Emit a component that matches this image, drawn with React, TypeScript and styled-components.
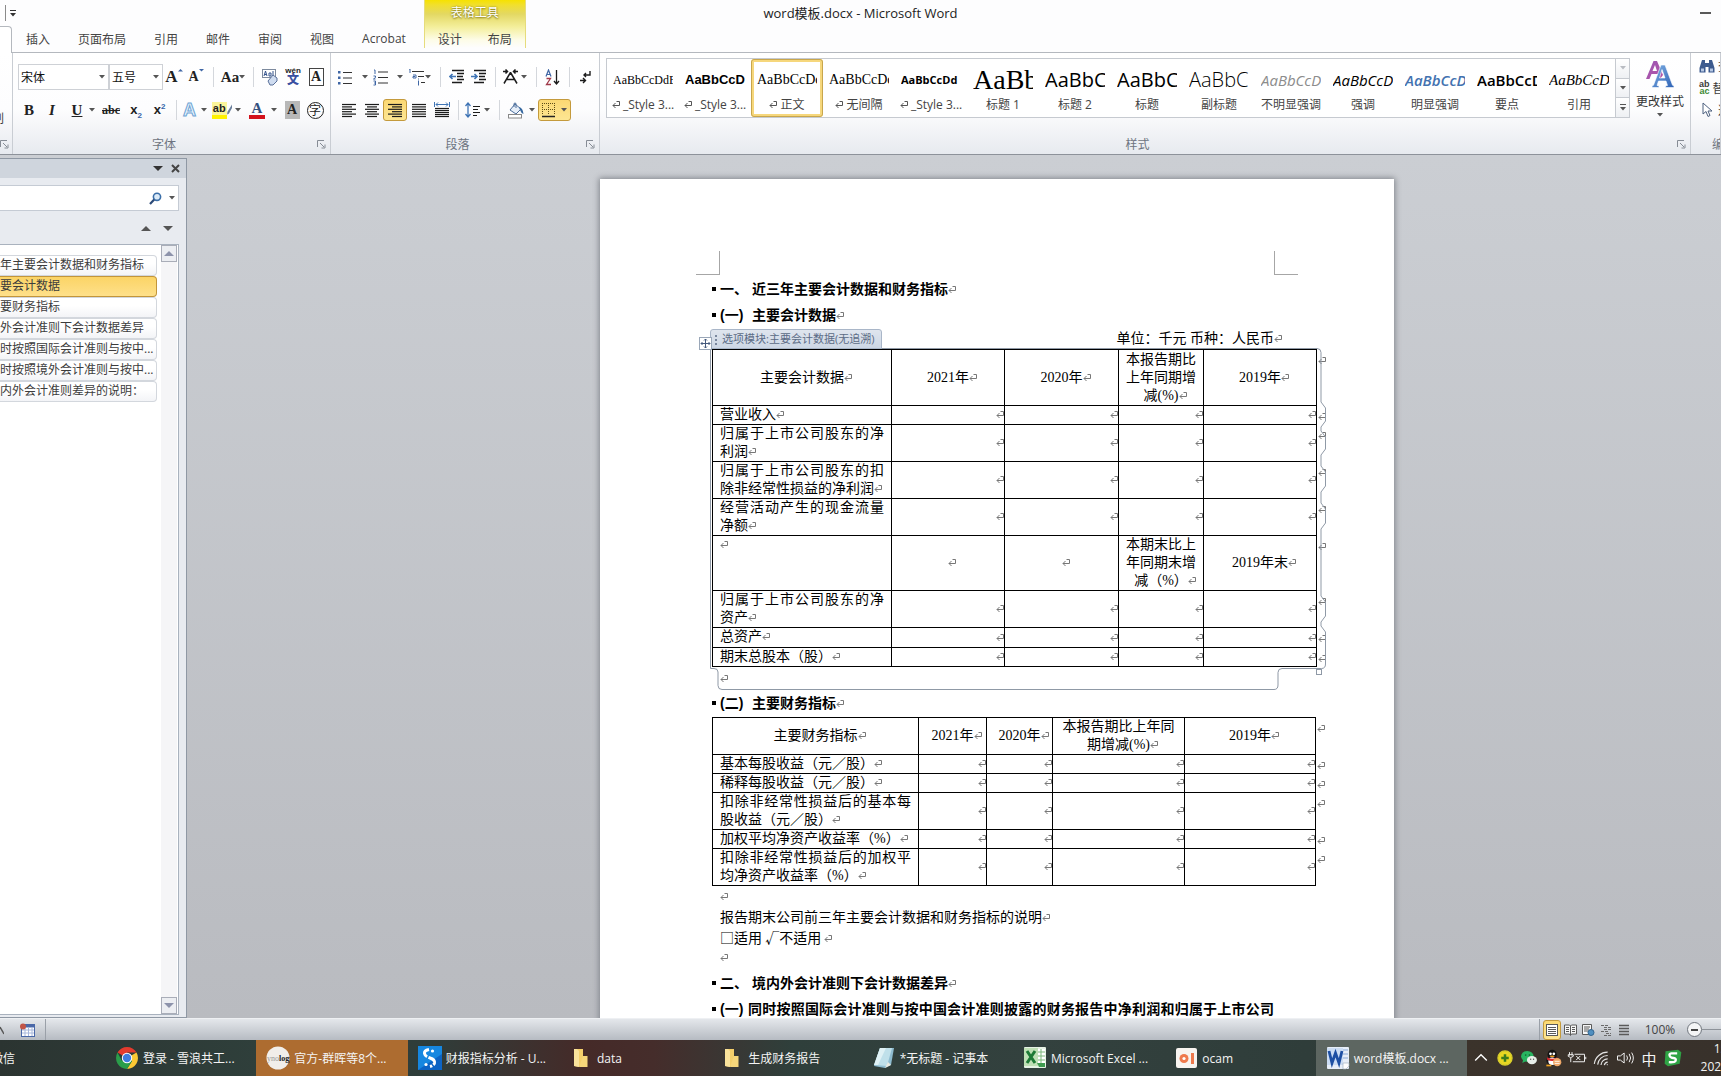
import React from "react";
import styled, { createGlobalStyle, css } from "styled-components";

const UI = '"Open Sans", "Noto Sans CJK SC", sans-serif';
const DOC = '"Liberation Serif", "Noto Sans CJK SC", serif';
const ARIAL = '"Liberation Sans", "Noto Sans CJK SC", sans-serif';

const Global = createGlobalStyle`
  * { box-sizing: border-box; }
  body { margin: 0; font-family: ${UI}; font-size: 12px; color: #3c3c3c; overflow: hidden; }
  button, select, input { font: inherit; color: inherit; margin: 0; }
  h1, h2, p { margin: 0; }
`;

const Shell = styled.div`
  display: flex;
  flex-direction: column;
  height: 100vh;
  background: #fdfdfe;
`;

/* ---------- title bar and tabs ---------- */

const Header = styled.header`
  display: grid;
  flex: none;
  grid-template-columns: auto auto 1fr;
  grid-template-rows: 26px 26px;
  background: #fdfdfe;
  border-bottom: 1px solid #b4b8be;
`;

const Title = styled.div`
  grid-row: 1;
  grid-column: 1 / -1;
  justify-self: center;
  line-height: 26px;
  font-size: 13px;
  color: #222;
  white-space: pre;
`;

const PlainButton = styled.button`
  display: inline-flex;
  align-items: center;
  justify-content: center;
  padding: 0;
  border: 0;
  background: none;
`;

const QuickAccess = styled(PlainButton)`
  grid-row: 1;
  grid-column: 1;
  justify-self: start;
  align-self: center;
  width: 15px;
  height: 16px;
  margin-left: 5px;
  border-left: 1px solid #8a8a8a;
`;

const Minimize = styled(PlainButton)`
  grid-row: 1;
  grid-column: 3;
  justify-self: end;
  width: 32px;
`;

const Tabs = styled.nav`
  grid-row: 2;
  grid-column: 1;
  display: flex;
`;

const ActiveTabEdge = styled.div`
  width: 12px;
  margin-bottom: -1px;
  border: 1px solid #b4b8be;
  border-width: 1px 1px 0 0;
  border-radius: 0 4px 0 0;
  background: #fff;
`;

const Tab = styled(PlainButton)`
  padding: 0 14px 1px;
  color: #444;
  white-space: nowrap;
`;

const ContextTabs = styled.div`
  grid-row: 1 / 3;
  grid-column: 2;
  display: flex;
  flex-direction: column;
  width: 102px;
  margin: 0 0 4px 4px;
  border: solid #e6dc7c;
  border-width: 0 1px;
  background: linear-gradient(#f6e200 0, #f1df2e 5px, #e3d862 14px, #f4ef9c 27px, #fdfce8 40px, #fdfdfe 100%);
`;

const ContextTitle = styled.div`
  line-height: 26px;
  text-align: center;
  color: #fff;
  text-shadow: 0 0 2px #8a8220, 0 1px 2px #8a8220;
`;

const ContextRow = styled.div`
  display: flex;
  height: 26px;
  flex: none;
  & > button { flex: 1; padding: 0 0 1px; }
`;

/* ---------- ribbon ---------- */

const Ribbon = styled.div`
  display: flex;
  flex: none;
  height: 102px;
  overflow: hidden;
  background: linear-gradient(#fff 0, #fdfdfe 55%, #e7eaef 100%);
  border-bottom: 1px solid #8d929a;
`;

const Group = styled.section<{ $w?: number; $grow?: boolean }>`
  display: flex;
  flex-direction: column;
  ${(p) => (p.$grow ? "flex: 1; min-width: 0;" : `flex: none; width: ${p.$w}px;`)}
  overflow: hidden;
  border-right: 1px solid #c9cdd3;
`;

const GroupBody = styled.div<{ $pad: string; $gap?: number }>`
  display: flex;
  flex: 1;
  flex-direction: column;
  gap: ${(p) => p.$gap ?? 9}px;
  padding: ${(p) => p.$pad};
`;

const GroupFoot = styled.div`
  display: flex;
  align-items: center;
  height: 20px;
  padding-right: 3px;
  color: #6d7480;
  & > span { flex: 1; text-align: center; white-space: nowrap; }
`;

const EdgeFoot = styled(GroupFoot)`
  justify-content: flex-end;
  padding: 0;
`;

const Launcher = styled(PlainButton)`
  width: 12px;
  height: 12px;
`;

const Row = styled.div<{ $h: number; $indent?: number }>`
  display: flex;
  align-items: center;
  height: ${(p) => p.$h}px;
  padding-left: ${(p) => p.$indent ?? 0}px;
`;

const Tool = styled(PlainButton)<{ $w?: number; $on?: boolean }>`
  flex: none;
  width: ${(p) => p.$w ?? 22}px;
  height: 22px;
  color: #222;
  ${(p) =>
    p.$on &&
    css`
      border: 1px solid #c49a3c;
      border-radius: 3px;
      background: linear-gradient(#fbd873, #fde693);
    `}
`;

const SizeTool = styled(Tool)`
  & > svg { align-self: flex-start; margin-top: 3px; }
`;

const Split = styled(Tool)`
  justify-content: space-between;
  padding: 0 3px 0 2px;
`;

const Sep = styled.span<{ $w?: number }>`
  flex: none;
  width: ${(p) => p.$w ?? 12}px;
  height: 20px;
  background: linear-gradient(#d4d7dc, #d4d7dc) center / 1px 100% no-repeat;
`;

const Glyph = styled.span<{ $size?: number; $serif?: boolean; $italic?: boolean; $color?: string }>`
  font-family: ${(p) => (p.$serif ? '"Liberation Serif", serif' : ARIAL)};
  font-size: ${(p) => p.$size ?? 14}px;
  line-height: 16px;
  font-weight: 700;
  font-style: ${(p) => (p.$italic ? "italic" : "normal")};
  color: ${(p) => p.$color ?? "#222"};
  & sub, & sup { font-size: 8px; line-height: 0; color: #3565a8; }
`;

const Underlined = styled(Glyph)`text-decoration: underline;`;
const Struck = styled(Glyph)`text-decoration: line-through;`;

const Outlined = styled(Glyph)`
  color: #e8f3fc;
  -webkit-text-stroke: 1px #6ea4d4;
`;

const Barred = styled(Glyph)<{ $bar: string; $hl?: string }>`
  display: inline-block;
  width: 16px;
  line-height: 13px;
  text-align: center;
  border-bottom: 4px solid ${(p) => p.$bar};
  background: ${(p) => p.$hl ?? "none"};
`;

const Boxed = styled(Glyph)<{ $fill?: string }>`
  width: 15px;
  text-align: center;
  border: 1px solid ${(p) => p.$fill ?? "#444"};
  background: ${(p) => p.$fill ?? "#fff"};
`;

const Circled = styled.span`
  width: 17px;
  height: 17px;
  border: 1px solid #222;
  border-radius: 50%;
  line-height: 15px;
  font-size: 12px;
  text-align: center;
`;

const Pinyin = styled.span`
  display: flex;
  flex-direction: column;
  align-items: center;
  font: 700 8px/6px ${ARIAL};
  & b { font-size: 12px; line-height: 12px; color: #3a4fa0; }
`;

const PickWrap = styled.label<{ $w: number }>`
  display: grid;
  flex: none;
  width: ${(p) => p.$w}px;
  height: 26px;
  align-items: center;
  & > * { grid-area: 1 / 1; }
  & > svg { justify-self: end; margin-right: 4px; pointer-events: none; }
`;

const Pick = styled.select`
  width: 100%;
  height: 26px;
  padding: 0 2px;
  appearance: none;
  border: 1px solid #ced1d6;
  border-radius: 0;
  background: #fff;
  color: #111;
`;

const StylesRow = styled.div`
  display: flex;
  height: 60px;
`;

const Gallery = styled.div`
  display: flex;
  flex: 1;
  min-width: 0;
  overflow: hidden;
  border: 1px solid #c6cad0;
  background: #fff;
`;

const StyleCard = styled.button<{ $on?: boolean }>`
  display: flex;
  flex: none;
  flex-direction: column;
  justify-content: flex-end;
  width: 72px;
  height: 58px;
  padding: 0 3px;
  border: 3px solid ${(p) => (p.$on ? "#f6d77c" : "transparent")};
  border-radius: 3px;
  outline: ${(p) => (p.$on ? "1px solid #c8a64c" : "none")};
  outline-offset: -1px;
  background: none;
  text-align: center;
`;

const Sample = styled.span<{ $font: string; $size: number; $css?: string }>`
  overflow: hidden;
  height: 31px;
  font-family: ${(p) => p.$font};
  font-size: ${(p) => p.$size}px;
  line-height: 30px;
  color: #000;
  text-align: left;
  white-space: nowrap;
  ${(p) => p.$css}
`;

const CardName = styled.span`
  line-height: 18px;
  white-space: nowrap;
  margin: 0 -6px;
  color: #444;
`;

const Scrollers = styled.div`
  display: flex;
  flex: none;
  flex-direction: column;
  width: 14px;
  & > button {
    flex: 1;
    border: 1px solid #c6cad0;
    border-left: 0;
    margin-bottom: -1px;
    background: linear-gradient(#fff, #eef0f3);
  }
  & > button:last-child { margin-bottom: 0; }
`;

const ChangeStyles = styled(PlainButton)`
  flex-direction: column;
  flex: none;
  width: 60px;
  gap: 3px;
  color: #333;
  white-space: nowrap;
`;

const EditTool = styled(PlainButton)`
  flex: none;
  justify-content: flex-start;
  gap: 3px;
  height: 18px;
  white-space: nowrap;
  & > svg { flex: none; }
`;

const CutLabel = styled.div<{ $w: number; $align?: string }>`
  display: flex;
  justify-content: ${(p) => p.$align ?? "flex-end"};
  width: ${(p) => p.$w}px;
  overflow: hidden;
  white-space: nowrap;
`;

/* ---------- work area ---------- */

const Work = styled.div`
  display: flex;
  flex: 1;
  min-height: 0;
  background: linear-gradient(#cbced3, #b9bbc0);
`;

const Pane = styled.aside`
  display: flex;
  flex: none;
  flex-direction: column;
  width: 187px;
  margin-top: 3px;
  border: solid #8f98a4;
  border-width: 1px 1px 1px 0;
  background: #e8ebf0;
`;

const PaneHead = styled.div`
  display: flex;
  align-items: center;
  justify-content: flex-end;
  gap: 8px;
  height: 19px;
  padding-right: 6px;
  background: #cfd5dd;
`;

const SearchBox = styled.label`
  display: flex;
  align-items: center;
  height: 26px;
  margin: 7px 7px 0 0;
  padding-right: 3px;
  gap: 7px;
  border: 1px solid #c5cbd4;
  border-left: 0;
  background: #fff;
`;

const SearchInput = styled.input`
  flex: 1;
  min-width: 0;
  border: 0;
  outline: 0;
  background: none;
`;

const PaneNav = styled.div`
  display: flex;
  align-items: center;
  justify-content: flex-end;
  gap: 12px;
  height: 33px;
  padding: 2px 13px 0 0;
`;

const PaneList = styled.div`
  display: flex;
  flex: 1;
  margin: 0 7px 2px 0;
  border: solid #a9b2be;
  border-width: 1px 1px 1px 0;
  background: #fff;
`;

const Outline = styled.ul`
  flex: 1;
  min-width: 0;
  margin: 0;
  padding: 10px 4px 0 0;
  list-style: none;
`;

const OutlineItem = styled.li<{ $on?: boolean }>`
  height: 21px;
  overflow: hidden;
  border: 1px solid ${(p) => (p.$on ? "#c2953a" : "#d3d7dd")};
  border-left: 0;
  border-radius: 0 4px 4px 0;
  background: ${(p) => (p.$on ? "linear-gradient(#fbd466, #fee08a)" : "linear-gradient(#fff 40%, #f3f4f7)")};
  line-height: 18px;
  white-space: nowrap;
`;

const ScrollColumn = styled.div`
  display: flex;
  flex: none;
  flex-direction: column;
  justify-content: space-between;
  width: 16px;
  margin-right: 1px;
  background: #f5f5f7;
`;

const ScrollEnd = styled(PlainButton)`
  height: 17px;
  border: 1px solid #a9adb8;
  background: #eceef2;
`;

const Canvas = styled.main`
  display: flex;
  flex: 1;
  min-width: 0;
  justify-content: center;
  align-items: flex-start;
  padding: 24px 0 0 86px;
  overflow: hidden;
`;

const Page = styled.article`
  position: relative;
  flex: none;
  width: 794px;
  min-height: 1123px;
  padding: 96px 120px;
  background: #fff;
  box-shadow: 0 0 6px 1px #80848b;
  color: #000;
  font: 14px/20px ${DOC};
`;

const Crop = styled.span<{ $side: "left" | "right" }>`
  position: absolute;
  top: 72px;
  ${(p) => p.$side}: 96px;
  width: 24px;
  height: 24px;
  border-bottom: 1px solid #a6a6a6;
  border-${(p) => (p.$side === "left" ? "right" : "left")}: 1px solid #a6a6a6;
`;

const headingCss = css`
  display: flex;
  align-items: center;
  margin-left: -8px;
  font-family: ${ARIAL};
  font-size: 14px;
  font-weight: 700;
  white-space: nowrap;
  &::before { content: ""; width: 4px; height: 4px; margin-right: 4px; background: #000; }
`;
const Heading1 = styled.h1`${headingCss} line-height: 28px;`;
const Heading2 = styled.h2`${headingCss} line-height: 24px; margin-bottom: 2px;`;
const Num = styled.span<{ $w?: number }>`width: ${(p) => p.$w ?? 32}px;`;
const FullLine = styled.span`
  flex: 1;
  text-align: justify;
  text-align-last: justify;
`;

const Para = styled.p<{ $h?: number; $end?: boolean }>`
  line-height: ${(p) => p.$h ?? 20}px;
  white-space: nowrap;
  ${(p) => p.$end && "text-align: right; margin-right: -8px;"}
`;

const ChoicePara = styled(Para)`
  font-family: "Noto Sans CJK JP", "Noto Sans CJK SC", sans-serif;
  line-height: 19px;
`;

const Control = styled.section`position: relative;`;

const ControlOutline = styled.svg`
  position: absolute;
  top: 0;
  left: -24px;
  pointer-events: none;
`;

const ControlTag = styled.div`
  position: absolute;
  top: 0;
  left: -10px;
  display: flex;
  align-items: center;
  gap: 4px;
  height: 20px;
  padding: 0 7px 0 4px;
  border: 1px solid #a9b6c8;
  border-radius: 3px 3px 0 0;
  background: linear-gradient(#dfe5ee, #cdd7e5);
  font: 11px/18px ${UI};
  color: #5b6b85;
  white-space: nowrap;
`;

const Handle = styled.span`
  position: absolute;
  top: 8px;
  left: -21px;
  display: flex;
  width: 13px;
  height: 13px;
  border: 1px solid #9aa7b8;
  background: #fff;
`;

const DocTable = styled.table<{ $w: number }>`
  width: ${(p) => p.$w}px;
  margin-left: -8px;
  border-collapse: collapse;
  table-layout: fixed;
  line-height: 18px;
`;

const Th = styled.th`
  padding: 0 6px;
  border: 1px solid #000;
  font-weight: 400;
  text-align: center;
  & > svg { margin-right: -8px; }
`;
const Label = styled.td`
  padding: 0 7px;
  border: 1px solid #000;
  vertical-align: top;
  text-align: justify;
`;
const Empty = styled.td`
  padding: 0;
  border: 1px solid #000;
  text-align: right;
`;
const RowEnd = styled.td`
  padding: 3px 0 0 1px;
  border: 0;
  vertical-align: top;
  line-height: 15px;
`;
const Tr = styled.tr<{ $h: number }>`height: ${(p) => p.$h}px;`;
const Col = styled.col<{ $w: number }>`width: ${(p) => p.$w}px;`;

/* ---------- status bar and task bar ---------- */

const Status = styled.footer`
  display: flex;
  flex: none;
  align-items: center;
  height: 22px;
  overflow: hidden;
  border-top: 1px solid #eef0f3;
  background: linear-gradient(#e4e7eb, #b6bbc2);
`;

const StatusLeft = styled.div`
  display: flex;
  align-items: center;
  height: 100%;
  gap: 16px;
  width: 46px;
  border-right: 1px solid #9aa0a8;
`;

const StatusRight = styled.div`
  display: flex;
  align-items: center;
  height: 100%;
  width: 182px;
  margin-left: auto;
  padding-left: 3px;
  border-left: 1px solid #9aa0a8;
`;

const ViewButton = styled(Tool)`
  width: 18px;
  height: 20px;
`;

const ZoomText = styled.span`
  flex: none;
  width: 54px;
  text-align: center;
  font-size: 12px;
  color: #444;
`;

const ZoomOut = styled(PlainButton)`
  flex: none;
  width: 15px;
  height: 15px;
  border: 1px solid #6f757d;
  border-radius: 50%;
  background: #f4f5f6;
`;

const ZoomRange = styled.input`
  flex: none;
  width: 100px;
  height: 15px;
  appearance: none;
  background: linear-gradient(#8d9299, #8d9299) center / 100% 1px no-repeat;
`;

const Taskbar = styled.div`
  display: flex;
  flex: none;
  height: 36px;
  overflow: hidden;
  color: #f4f4f4;
  background: linear-gradient(90deg, #2b3431 0, #2f3f3b 15%, #2f3d3a 25%, #452a28 34%, #452d2b 38%, #2f3f3b 46%, #33413e 60%, #2f3d3a 76%, #3b332b 85%, #38312b 100%);
`;

const TaskEdge = styled.div`
  display: flex;
  flex: none;
  align-items: center;
  width: 105px;
`;

const TaskItems = styled.div`
  display: flex;
  flex: 1;
  min-width: 0;
`;

const Task = styled.button<{ $bg?: string }>`
  display: flex;
  flex: 1 1 0;
  align-items: center;
  gap: 4px;
  min-width: 0;
  padding: 0 0 0 10px;
  border: 0;
  background: ${(p) => p.$bg ?? "none"};
  white-space: nowrap;
  & > svg { flex: none; }
`;

const Tray = styled.div`
  display: flex;
  flex: none;
  align-items: center;
  width: 254px;
  padding-left: 2px;
  overflow: hidden;
`;

const TrayButton = styled(PlainButton)`
  flex: none;
  width: 24px;
  height: 36px;
  font-size: 15px;
`;

const Clock = styled.div`
  display: flex;
  flex: none;
  flex-direction: column;
  width: 88px;
  align-items: center;
  line-height: 18px;
`;

/* ---------- drawings ---------- */

const Caret = ({ c = "#555", w = 6 }: { c?: string; w?: number }) => (
  <svg width={w} height={w / 2 + 1} viewBox="0 0 6 4" aria-hidden="true"><path d="M0 0h6L3 3.6z" fill={c} /></svg>
);
const Tri = ({ up, c = "#333", w = 10 }: { up?: boolean; c?: string; w?: number }) => (
  <svg width={w} height={w / 2} viewBox="0 0 10 5" aria-hidden="true"><path d={up ? "M0 5h10L5 0z" : "M0 0h10L5 5z"} fill={c} /></svg>
);
const BarCaret = ({ c = "#333" }: { c?: string }) => (
  <svg width="8" height="7" viewBox="0 0 8 7" aria-hidden="true"><path d="M1 0h6v1H1zM1 3h6L4 6.5z" fill={c} /></svg>
);
const LaunchIcon = () => (
  <svg width="9" height="9" viewBox="0 0 9 9" fill="none" stroke="#868c95" aria-hidden="true"><path d="M.5 7V.5H7M3 3l4 4M8 4.500V8H4.500" /></svg>
);
const Mark = ({ c = "#777" }: { c?: string }) => (
  <svg width="8" height="9" viewBox="0 0 8 9" fill="none" stroke={c} aria-hidden="true">
    <path d="M4.500 1.500h3v4H1M3.500 3L1 5.500 3.500 8" />
  </svg>
);

const Lines = ({ rows, arrows }: { rows: [number, number][]; arrows?: boolean }) => (
  <svg width="16" height="17" viewBox="0 0 16 17" aria-hidden="true">
    {rows.map(([x, w], i) => <path key={i} d={`M${x} ${(arrows ? 6.5 : 2.5) + i * (arrows ? 2 : 2.4)}h${w}`} stroke="#1b1b1b" strokeWidth="1.2" />)}
    {arrows && <path d="M.5 0v5M15.500 0v5M2 2.500h12M4 .5l-2 2 2 2M12 .5l2 2-2 2" fill="none" stroke="#3f74b5" />}
  </svg>
);
const leftRows: [number, number][] = [[1, 14], [1, 10], [1, 14], [1, 10], [1, 14], [1, 10]];
const midRows: [number, number][] = [[1, 14], [3, 10], [1, 14], [3, 10], [1, 14], [3, 10]];
const rightRows: [number, number][] = [[1, 14], [5, 10], [1, 14], [5, 10], [1, 14], [5, 10]];
const fullRows: [number, number][] = [[1, 14], [1, 14], [1, 14], [1, 14], [1, 14], [1, 14]];

const ListIcon = ({ kind }: { kind: "dot" | "num" | "multi" }) => (
  <svg width="17" height="17" viewBox="0 0 17 17" aria-hidden="true">
    {kind === "dot" && [3, 8.5, 14].map((y) => <g key={y}><rect x="0" y={y - 1} width="2.500" height="2.500" fill="#3f66a5" /><path d={`M5 ${y + 0.5}h9`} stroke="#333" /></g>)}
    {kind === "num" && <><path d="M1 1h1v4M.5 7h2v1.500l-2 1.500h2M.5 12h2v2h-1 1v2h-2" fill="none" stroke="#3f66a5" /><path d="M5 3h10M5 8.500h10M5 14h10" stroke="#333" /></>}
    {kind === "multi" && <><path d="M1 0h1v4M5 6h3v3H5V7.500h2M10.500 11.500v5M10.500 9.500v1" fill="none" stroke="#3f66a5" /><path d="M4 2.500h12M10 7.500h6M13 13.500h4" stroke="#333" /></>}
  </svg>
);
const IndentIcon = ({ out }: { out?: boolean }) => (
  <svg width="16" height="16" viewBox="0 0 16 16" fill="none" aria-hidden="true">
    <path d="M3 1.500h12M8 4.500h7M8 7.500h6M8 10.500h7M3 13.500h10" stroke="#1b1b1b" strokeWidth="1.500" />
    <path d={out ? "M7 7.500H1M3.500 5L1 7.500 3.500 10" : "M0 7.500h6M3.500 5L6 7.500 3.500 10"} stroke="#3f74b5" strokeWidth="1.600" />
  </svg>
);
const AsianIcon = () => (
  <svg width="17" height="16" viewBox="0 0 17 16" fill="none" stroke="#1b1b1b" aria-hidden="true">
    <path d="M1 2.500h4M3.500.5l2 2-2 2M16 2.500h-4M13.500.5l-2 2 2 2M8.500 3.500L2 14.500M8.500 3.500L15 14.500M5 10.500h7" strokeWidth="1.500" />
  </svg>
);
const SortIcon = () => (
  <svg width="16" height="17" viewBox="0 0 16 17" fill="none" aria-hidden="true">
    <path d="M1 7.500L3.500 1 6 7.500M2 5.500h3" stroke="#3f66a5" strokeWidth="1.200" />
    <path d="M1.500 9.500h4L1.500 15.500h4.500" stroke="#a03a4a" strokeWidth="1.300" />
    <path d="M11.500 1v14M9 12l2.500 3 2.500-3" stroke="#1b1b1b" strokeWidth="1.300" />
  </svg>
);
const PilcrowIcon = () => (
  <svg width="12" height="14" viewBox="0 0 12 14" fill="none" stroke="#1b1b1b" strokeWidth="1.400" aria-hidden="true">
    <path d="M11 1v4H5M7 3L5 5l2 2M1 10.500h5M4 8l2.500 2.500L4 13" />
  </svg>
);
const SpacingIcon = () => (
  <svg width="16" height="16" viewBox="0 0 16 16" fill="none" aria-hidden="true">
    <path d="M3 1v14M.5 4L3 1l2.500 3M.5 12L3 15l2.500-3" stroke="#3f74b5" strokeWidth="1.300" />
    <path d="M8 4.500h7M8 7.500h5M8 10.500h7M8 13.500h4" stroke="#1b1b1b" strokeWidth="1.200" />
  </svg>
);
const BucketIcon = () => (
  <svg width="18" height="17" viewBox="0 0 18 17" fill="none" aria-hidden="true">
    <path d="M8 2l6 5-5 5-6-4z" fill="#e6eef8" stroke="#4d6f9c" />
    <path d="M7 5V1.500q1-1 2 0V6" stroke="#4d6f9c" />
    <path d="M12 5q4 1 4.500 7-2.500-1-3.500-4z" fill="#35679f" />
    <rect x="1.500" y="12.500" width="13" height="3.500" fill="#fff" stroke="#888" />
  </svg>
);
const BordersIcon = () => (
  <svg width="15" height="16" viewBox="0 0 15 16" fill="none" stroke="#5f4d16" aria-hidden="true">
    <path d="M1.500 1v12M7.500 1v12M13.500 1v12M1 1.500h13M1 7.500h13" strokeDasharray="1 1" />
    <path d="M1 14.500h13" stroke="#222" strokeWidth="1.500" />
  </svg>
);
const ClearIcon = () => (
  <svg width="17" height="17" viewBox="0 0 17 17" fill="none" aria-hidden="true">
    <rect x=".5" y=".5" width="13" height="8" fill="#fff" stroke="#7d8a9e" />
    <path d="M2 7l1.500-5L5 7M2.500 5.500h2M7 7V4h2v3zM11 2v5" stroke="#33528c" />
    <path d="M6 12l5-6 4 3v3l-4 4H8z" fill="#cfdcf0" stroke="#5a7099" />
  </svg>
);
const PenIcon = () => (
  <svg width="6" height="12" viewBox="0 0 6 12" aria-hidden="true"><path d="M5.500 0L6 3 2 10 0 11l.5-3z" fill="#6a7f9c" /></svg>
);
const StylesIcon = () => (
  <svg width="30" height="29" viewBox="0 0 30 29" fill="none" aria-hidden="true">
    <defs>
      <linearGradient id="sa" x1="0" y1="0" x2="1" y2="1"><stop offset="0" stopColor="#9a58b5" /><stop offset="1" stopColor="#b552a4" /></linearGradient>
      <linearGradient id="sb" x1="0" y1="0" x2="1" y2="1"><stop offset="0" stopColor="#7fb0e4" /><stop offset="1" stopColor="#2e62b5" /></linearGradient>
    </defs>
    <path d="M1 19L8.500 1H12l6 14-3 4-2-5H6.500L4.500 19zM7.500 11h4.500L10 5z" fill="url(#sa)" />
    <path d="M7 26l1.500-.8L16 5h4l7.500 20.200L29 26v1.500h-8.500V26l2-.6-1.500-4.400h-7.500L12 25.400l2 .6v1.500H7zM14.500 18h5.500l-3-8.500z" fill="url(#sb)" stroke="#fff" strokeWidth=".6" />
  </svg>
);
const FindIcon = () => (
  <svg width="16" height="14" viewBox="0 0 16 14" aria-hidden="true">
    <path d="M3 1h3v3h4V1h3l2.500 8v4.500h-6V8h-3v5.500h-6V9z" fill="#3d5b8f" /><path d="M2 9.500h3v3H2zM11 9.500h3v3h-3z" fill="#b6c8e4" />
  </svg>
);
const CursorIcon = () => (
  <svg width="16" height="16" viewBox="0 0 16 16" aria-hidden="true"><path d="M4 1v11l3-2.500 2 5 2-1-2-4.500h4z" fill="#fff" stroke="#4d607f" /></svg>
);
const Magnifier = () => (
  <svg width="13" height="13" viewBox="0 0 13 13" fill="none" aria-hidden="true">
    <circle cx="8" cy="4.800" r="3.600" fill="#dcebf8" stroke="#3a6ea8" strokeWidth="1.600" /><path d="M5.200 7.600L1 12" stroke="#2b4a78" strokeWidth="2.200" />
  </svg>
);
const Cross = () => (
  <svg width="9" height="9" viewBox="0 0 9 9" stroke="#444" strokeWidth="2" aria-hidden="true"><path d="M1 1l7 7M8 1L1 8" /></svg>
);

const ReplaceWrap = styled.span`
  display: flex;
  flex-direction: column;
  width: 16px;
  font: 700 9px/7px ${ARIAL};
  & b { align-self: flex-end; color: #3d8a35; }
`;

/* ---------- data ---------- */

const SERIFLIKE = '"Liberation Serif", serif';
const SANS = '"Open Sans", sans-serif';
const styleCards: { s: string; n: string; f: string; z: number; c?: string; m?: boolean; on?: boolean }[] = [
  { s: "AaBbCcDdE", n: "_Style 3...", f: SERIFLIKE, z: 12, m: true },
  { s: "AaBbCcD", n: "_Style 3...", f: ARIAL, z: 13, c: "font-weight:700;", m: true },
  { s: "AaBbCcDd", n: "正文", f: SERIFLIKE, z: 14, m: true, on: true },
  { s: "AaBbCcDd", n: "无间隔", f: SERIFLIKE, z: 14, m: true },
  { s: "AaBbCcDd", n: "_Style 3...", f: SANS, z: 11, c: "font-weight:700;", m: true },
  { s: "AaBb", n: "标题 1", f: SERIFLIKE, z: 28 },
  { s: "AaBbC", n: "标题 2", f: SANS, z: 20 },
  { s: "AaBbC", n: "标题", f: SANS, z: 20 },
  { s: "AaBbC", n: "副标题", f: SANS, z: 20, c: "font-weight:300;" },
  { s: "AaBbCcD", n: "不明显强调", f: SANS, z: 15, c: "font-style:italic;color:#8c8c8c;" },
  { s: "AaBbCcD", n: "强调", f: SANS, z: 15, c: "font-style:italic;" },
  { s: "AaBbCcD", n: "明显强调", f: SANS, z: 15, c: "font-style:italic;font-weight:600;color:#4372b0;" },
  { s: "AaBbCcD", n: "要点", f: SANS, z: 15, c: "font-weight:600;" },
  { s: "AaBbCcDd", n: "引用", f: SERIFLIKE, z: 15, c: "font-style:italic;" },
];

const outline = [
  "年主要会计数据和财务指标",
  "要会计数据",
  "要财务指标",
  "外会计准则下会计数据差异",
  "时按照国际会计准则与按中...",
  "时按照境外会计准则与按中...",
  "内外会计准则差异的说明：",
];

type RowSpec = { h: number; cells: (string | null)[]; head?: boolean };

const tableOne: RowSpec[] = [
  { h: 56, head: true, cells: ["主要会计数据", "2021年", "2020年", "本报告期比上年同期增减(%)", "2019年"] },
  { h: 19, cells: ["营业收入"] },
  { h: 37, cells: ["归属于上市公司股东的净利润"] },
  { h: 37, cells: ["归属于上市公司股东的扣除非经常性损益的净利润"] },
  { h: 37, cells: ["经营活动产生的现金流量净额"] },
  { h: 55, head: true, cells: [null, "", "", "本期末比上年同期末增减（%）", "2019年末"] },
  { h: 37, cells: ["归属于上市公司股东的净资产"] },
  { h: 20, cells: ["总资产"] },
  { h: 19, cells: ["期末总股本（股）"] },
];
const tableTwo: RowSpec[] = [
  { h: 37, head: true, cells: ["主要财务指标", "2021年", "2020年", "本报告期比上年同期增减(%)", "2019年"] },
  { h: 19, cells: ["基本每股收益（元／股）"] },
  { h: 18, cells: ["稀释每股收益（元／股）"] },
  { h: 37, cells: ["扣除非经常性损益后的基本每股收益（元／股）"] },
  { h: 19, cells: ["加权平均净资产收益率（%）"] },
  { h: 37, cells: ["扣除非经常性损益后的加权平均净资产收益率（%）"] },
];

function FinanceTable({ rows, cols }: { rows: RowSpec[]; cols: number[] }) {
  return (
    <DocTable $w={cols.reduce((a, b) => a + b, 0) + 12}>
      <colgroup>
        {cols.map((w, i) => <Col key={i} $w={w} />)}
        <Col $w={12} />
      </colgroup>
      <tbody>
        {rows.map((r, i) => (
          <Tr key={i} $h={r.h}>
            {r.head
              ? r.cells.map((c, j) => (c === null ? <Label key={j}><Mark /></Label> : <Th key={j}>{c}<Mark /></Th>))
              : cols.map((_, j) => (j === 0 ? <Label key={j}>{r.cells[0]}<Mark /></Label> : <Empty key={j}><Mark /></Empty>))}
            <RowEnd><Mark /></RowEnd>
          </Tr>
        ))}
      </tbody>
    </DocTable>
  );
}

/* ---------- task bar drawings ---------- */

const Box = ({ children }: { children: React.ReactNode }) => (
  <svg width="24" height="24" viewBox="0 0 24 24" fill="none" aria-hidden="true">{children}</svg>
);
const Chrome = () => (
  <Box>
    <path d="M12 12L2.500 6.500A11 11 0 0 1 21.500 6.500H12z" fill="#e33b2e" />
    <path d="M12 12l9.500-5.500A11 11 0 0 1 12 23l5-8z" fill="#fcc934" />
    <path d="M12 12l5 3-5 8A11 11 0 0 1 2.500 6.500L7 15z" fill="#2a9d4a" />
    <circle cx="12" cy="12" r="5.200" fill="#fff" /><circle cx="12" cy="12" r="4.200" fill="#3f7de0" />
  </Box>
);
const Synology = () => (
  <Box><circle cx="12" cy="12" r="11.500" fill="#f1eeea" /><text x="1" y="14.500" fontSize="8" fontFamily="Liberation Serif, serif" fill="#999">yno<tspan fill="#222" fontWeight="700">logy</tspan></text></Box>
);
const SApp = () => (
  <Box>
    <rect width="24" height="24" fill="#1687e0" /><path d="M0 24L24 8v16z" fill="#0c63c4" />
    <path d="M11 3.500q-5 1-4.500 4t5.500 4.500q5 1.500 4.500 5-.5 2.500-4.500 3.500" stroke="#fff" strokeWidth="3" strokeDasharray="11 1.500" />
    <circle cx="14.500" cy="5" r="1.600" fill="#fff" /><circle cx="8" cy="18.500" r="1.600" fill="#fff" />
  </Box>
);
const Folder = () => (
  <Box><path d="M5 3h9v15l-4 3-5-1z" fill="#f4cf6b" /><path d="M5 3h3l2 2v16l-5-1z" fill="#fae39c" /><path d="M14 10h4.500v11H10z" fill="#f6d67a" /></Box>
);
const Notepad = () => (
  <Box><path d="M8 2h14l-3 17-6 3-11-2z" fill="#8ebcd0" /><path d="M8 2h12l-5 18-13-1z" fill="#bfe0ea" /><path d="M8 2h6L6 19H2z" fill="#dff1f5" /><path d="M19 19l-6 3 3-6z" fill="#e9e9e0" /></Box>
);
const Excel = () => (
  <Box>
    <rect x="1" y="1" width="22" height="21" rx="1" fill="#e6f2e4" /><path d="M13 3h9v17h-9z" fill="#fff" />
    <path d="M14 6h8M14 10h8M14 14h8M14 18h8M18 3v17" stroke="#7cb77a" /><path d="M1 2h14v18H1z" fill="#bfe0b5" />
    <path d="M4 5l8 12M12 5L4 17" stroke="#1d7a35" strokeWidth="3" /><path d="M14 17h8v4h-6z" fill="#3f9a50" />
  </Box>
);
const Ocam = () => (
  <Box><rect x="2" y="2" width="21" height="20" rx="2" fill="#f8f4f0" /><circle cx="10" cy="12.500" r="4.500" fill="#ef7a4d" /><circle cx="10" cy="12.500" r="1.600" fill="#fff" /><path d="M18.500 7v11" stroke="#ef7a4d" strokeWidth="3" /></Box>
);
const WordIcon = () => (
  <Box>
    <rect x="1" y="1" width="22" height="22" rx="1" fill="#e7eef8" /><path d="M15 4h7M15 8h7M15 12h7" stroke="#88a8d8" />
    <path d="M1 2h16v17H1z" fill="#cbdcf3" /><path d="M3 5l3 12 3.500-10L13 17l3-12" stroke="#1d4fa3" strokeWidth="2.800" /><path d="M17 17h6v3l-3 3h-3z" fill="#fff" stroke="#9ab" strokeWidth=".6" />
  </Box>
);

const tasks: { icon: React.ReactNode; t: string; bg?: string }[] = [
  { icon: <Chrome />, t: "登录 - 雪浪共工..." },
  { icon: <Synology />, t: "官方-群晖等8个...", bg: "#ad6c30" },
  { icon: <SApp />, t: "财报指标分析 - U..." },
  { icon: <Folder />, t: "data" },
  { icon: <Folder />, t: "生成财务报告" },
  { icon: <Notepad />, t: "*无标题 - 记事本" },
  { icon: <Excel />, t: "Microsoft Excel ..." },
  { icon: <Ocam />, t: "ocam" },
  { icon: <WordIcon />, t: "word模板.docx ...", bg: "#5d6661" },
];

const tray: { n: string; d: React.ReactNode }[] = [
  { n: "显示隐藏的图标", d: <path d="M5 15l7-7 7 7" stroke="#fff" strokeWidth="1.600" /> },
  { n: "安全卫士", d: <><circle cx="12" cy="12" r="8.500" fill="#e8d722" /><circle cx="12" cy="12" r="8.500" stroke="#d9cf2c" strokeWidth="1.500" /><path d="M12 7.500v9M7.500 12h9" stroke="#3b7a1c" strokeWidth="3" /></> },
  { n: "微信", d: <><ellipse cx="10" cy="10" rx="7.500" ry="6.500" fill="#28b561" /><path d="M5 14l-1 4 4-2z" fill="#28b561" /><ellipse cx="15.500" cy="14.500" rx="6" ry="5" fill="#e7efe9" /><circle cx="8" cy="8.500" r="1" fill="#15632f" /><circle cx="12.500" cy="8.500" r="1" fill="#15632f" /><circle cx="14" cy="13.500" r=".8" fill="#555" /><circle cx="17.500" cy="13.500" r=".8" fill="#555" /></> },
  { n: "QQ", d: <><ellipse cx="11" cy="8" rx="5.500" ry="6" fill="#111" /><ellipse cx="11" cy="15" rx="7" ry="6" fill="#16161a" /><ellipse cx="11" cy="16" rx="4.500" ry="4.500" fill="#fff" /><path d="M5 11q6 4 12 0v3q-6 3-12 0z" fill="#d8292f" /><circle cx="9" cy="7" r="1.600" fill="#fff" /><circle cx="13" cy="7" r="1.600" fill="#fff" /><ellipse cx="11" cy="10" rx="3" ry="1" fill="#f0a020" /><circle cx="17" cy="17" r="5" fill="#f0a868" /><path d="M14 16h6M14 18.500h6" stroke="#fff" /><path d="M4 21h6" stroke="#f0a020" strokeWidth="2" /></> },
  { n: "电源", d: <path d="M3 5v4M6 5v4M1.500 8h6v2q-3 3-6 0zM4.500 12v5M9 7.500h12v9H7M22.500 10.500v3M11 9.500l5 5M16 9.500l-5 5" stroke="#eee" strokeWidth="1.200" /> },
  { n: "网络", d: <path d="M4 19A16 16 0 0 1 20 5M8 20A12 12 0 0 1 20 9M12 20.500A8 8 0 0 1 20 13M16 20.500A4.500 4.500 0 0 1 20 17M19 20h1" stroke="#e4e4e4" strokeWidth="1.400" /> },
  { n: "音量", d: <path d="M3 9.500h3.500L11 6v12l-4.500-3.500H3zM14 9q2 3 0 6M17 7q3.500 5 0 10M20 5.500q4 6.500 0 13" stroke="#eee" strokeWidth="1.200" /> },
];

export default function App() {
  return (
    <Shell>
      <Global />
      <Header>
        <Title>word模板.docx - Microsoft Word</Title>
        <QuickAccess aria-label="自定义快速访问工具栏"><BarCaret /></QuickAccess>
        <Minimize aria-label="最小化"><svg width="11" height="2" aria-hidden="true"><path d="M0 1h11" stroke="#222" strokeWidth="1.500" /></svg></Minimize>
        <Tabs>
          <ActiveTabEdge />
          {["插入", "页面布局", "引用", "邮件", "审阅", "视图", "Acrobat"].map((t) => <Tab key={t}>{t}</Tab>)}
        </Tabs>
        <ContextTabs>
          <ContextTitle>表格工具</ContextTitle>
          <ContextRow><Tab>设计</Tab><Tab>布局</Tab></ContextRow>
        </ContextTabs>
      </Header>

      <Ribbon>
        <Group $w={13}>
          <GroupBody $pad="56px 0 0"><CutLabel $w={4}>刷</CutLabel></GroupBody>
          <GroupFoot><Launcher aria-label="剪贴板"><LaunchIcon /></Launcher></GroupFoot>
        </Group>

        <Group $w={318}>
          <GroupBody $pad="11px 0 0 5px">
            <Row $h={26}>
              <PickWrap $w={91}><Pick aria-label="字体"><option>宋体</option></Pick><Caret /></PickWrap>
              <PickWrap $w={54}><Pick aria-label="字号"><option>五号</option></Pick><Caret /></PickWrap>
              <SizeTool aria-label="增大字体"><Glyph $serif $size={17}>A</Glyph><Tri up c="#3f66a5" w={5} /></SizeTool>
              <SizeTool aria-label="缩小字体"><Glyph $serif $size={14}>A</Glyph><Tri c="#3f66a5" w={5} /></SizeTool>
              <Sep />
              <Tool $w={28} aria-label="更改大小写"><Glyph $serif $size={15}>Aa</Glyph><Caret /></Tool>
              <Sep />
              <Tool aria-label="清除格式"><ClearIcon /></Tool>
              <Tool $w={24} aria-label="拼音指南"><Pinyin>wén<b>文</b></Pinyin></Tool>
              <Tool aria-label="字符边框"><Boxed $serif>A</Boxed></Tool>
            </Row>
            <Row $h={22}>
              <Tool aria-label="加粗"><Glyph $serif $size={15}>B</Glyph></Tool>
              <Tool $w={24} aria-label="倾斜"><Glyph $serif $italic $size={15}>I</Glyph></Tool>
              <Split $w={34} aria-label="下划线"><Tool as="span"><Underlined $serif $size={15}>U</Underlined></Tool><Caret /></Split>
              <Tool $w={26} aria-label="删除线"><Struck $serif $size={12}>abc</Struck></Tool>
              <Tool $w={24} aria-label="下标"><Glyph $size={13}>x<sub>2</sub></Glyph></Tool>
              <Tool $w={23} aria-label="上标"><Glyph $size={13}>x<sup>2</sup></Glyph></Tool>
              <Sep $w={10} />
              <Split $w={29} aria-label="文本效果"><Outlined $size={18}>A</Outlined><Caret /></Split>
              <Split $w={34} aria-label="突出显示"><Tool as="span" $w={20}><Barred $bar="#fff200" $size={11} $hl="#fbf59a">ab</Barred><PenIcon /></Tool><Caret /></Split>
              <Split $w={36} aria-label="字体颜色"><Tool as="span"><Barred $serif $bar="#d3121c" $size={15} $color="#34507e">A</Barred></Tool><Caret /></Split>
              <Tool $w={24} aria-label="字符底纹"><Boxed $serif $fill="#b8b8b8">A</Boxed></Tool>
              <Tool aria-label="带圈字符"><Circled>字</Circled></Tool>
            </Row>
          </GroupBody>
          <GroupFoot><span>字体</span><Launcher aria-label="字体设置"><LaunchIcon /></Launcher></GroupFoot>
        </Group>

        <Group $w={269}>
          <GroupBody $pad="11px 0 0 5px">
            <Row $h={26}>
              <Split $w={35} aria-label="项目符号"><ListIcon kind="dot" /><Caret /></Split>
              <Split $w={35} aria-label="编号"><ListIcon kind="num" /><Caret /></Split>
              <Split $w={28} aria-label="多级列表"><ListIcon kind="multi" /><Caret /></Split>
              <Sep />
              <Tool aria-label="减少缩进"><IndentIcon out /></Tool>
              <Tool aria-label="增加缩进"><IndentIcon /></Tool>
              <Sep $w={10} />
              <Split $w={30} aria-label="中文版式"><AsianIcon /><Caret /></Split>
              <Sep />
              <Tool aria-label="排序"><SortIcon /></Tool>
              <Sep $w={10} />
              <Tool aria-label="显示编辑标记"><PilcrowIcon /></Tool>
            </Row>
            <Row $h={22} $indent={1}>
              <Tool $w={23} aria-label="左对齐"><Lines rows={leftRows} /></Tool>
              <Tool $w={23} aria-label="居中"><Lines rows={midRows} /></Tool>
              <Tool $w={24} $on aria-label="右对齐"><Lines rows={rightRows} /></Tool>
              <Tool $w={23} aria-label="两端对齐"><Lines rows={fullRows} /></Tool>
              <Tool $w={23} aria-label="分散对齐"><Lines rows={fullRows.slice(1)} arrows /></Tool>
              <Sep $w={10} />
              <Split $w={30} aria-label="行距"><SpacingIcon /><Caret /></Split>
              <Sep />
              <Split $w={33} aria-label="底纹"><BucketIcon /><Caret /></Split>
              <Split $w={33} $on aria-label="边框"><BordersIcon /><Caret /></Split>
            </Row>
          </GroupBody>
          <GroupFoot><span>段落</span><Launcher aria-label="段落设置"><LaunchIcon /></Launcher></GroupFoot>
        </Group>

        <Group $grow>
          <GroupBody $pad="5px 0 0 6px">
            <StylesRow>
              <Gallery>
                {styleCards.map((s, i) => (
                  <StyleCard key={i} $on={s.on}>
                    <Sample $font={s.f} $size={s.z} $css={s.c}>{s.s}</Sample>
                    <CardName>{s.m && <Mark c="#555" />} {s.n}</CardName>
                  </StyleCard>
                ))}
              </Gallery>
              <Scrollers>
                <PlainButton aria-label="上一行"><Caret c="#b9bcc2" /></PlainButton>
                <PlainButton aria-label="下一行"><Caret /></PlainButton>
                <PlainButton aria-label="其他"><BarCaret c="#555" /></PlainButton>
              </Scrollers>
              <ChangeStyles><StylesIcon />更改样式<Caret /></ChangeStyles>
            </StylesRow>
          </GroupBody>
          <GroupFoot><span>样式</span><Launcher aria-label="样式设置"><LaunchIcon /></Launcher></GroupFoot>
        </Group>

        <Group $w={30}>
          <GroupBody $pad="4px 0 0 8px" $gap={4}>
            <EditTool><FindIcon />查找</EditTool>
            <EditTool><ReplaceWrap>ab<b>ac</b></ReplaceWrap>替换</EditTool>
            <EditTool><CursorIcon />选择</EditTool>
          </GroupBody>
          <EdgeFoot><CutLabel $w={8} $align="flex-start">编辑</CutLabel></EdgeFoot>
        </Group>
      </Ribbon>

      <Work>
        <Pane>
          <PaneHead>
            <PlainButton aria-label="窗格选项"><Tri /></PlainButton>
            <PlainButton aria-label="关闭"><Cross /></PlainButton>
          </PaneHead>
          <SearchBox><SearchInput aria-label="搜索文档" /><Magnifier /><Caret /></SearchBox>
          <PaneNav>
            <PlainButton aria-label="上一个"><Tri up c="#555" /></PlainButton>
            <PlainButton aria-label="下一个"><Tri c="#555" /></PlainButton>
          </PaneNav>
          <PaneList>
            <Outline>{outline.map((t, i) => <OutlineItem key={t} $on={i === 1}>{t}</OutlineItem>)}</Outline>
            <ScrollColumn>
              <ScrollEnd aria-label="向上滚动"><Tri up c="#8d93ab" /></ScrollEnd>
              <ScrollEnd aria-label="向下滚动"><Tri c="#8d93ab" /></ScrollEnd>
            </ScrollColumn>
          </PaneList>
        </Pane>

        <Canvas>
          <Page>
            <Crop $side="left" />
            <Crop $side="right" />
            <Heading1><Num>一、</Num>近三年主要会计数据和财务指标<Mark /></Heading1>
            <Heading2><Num>(一)</Num>主要会计数据<Mark /></Heading2>
            <Control>
              <Para $end>单位：千元 币种：人民币<Mark /></Para>
              <FinanceTable rows={tableOne} cols={[179, 113, 114, 85, 113]} />
              <Para $h={24}><Mark /></Para>
              <ControlOutline width="640" height="365" viewBox="0 0 640 365" fill="none" stroke="#8f99a6" aria-hidden="true">
                <path d="M14.500 19.500H621q4 0 4 4V73l4.500 6V92l-4.500 6v4l4.500 6V120l-4.500 6V137l4.500 6V157l-4.500 6V174l4.500 6V194l-4.500 6V267l4.500 6V287l-4.500 6v4l4.500 6V335q0 4.500-4 4.500H586q-4 0-4 4V356q0 4.500-4 4.500H26q-4 0-4-4V343q0-3.500-4-3.500H14.500z" strokeLinejoin="round" />
                <rect x="620.500" y="340.500" width="5" height="5" fill="#fff" />
              </ControlOutline>
              <ControlTag>
                <svg width="3" height="11" viewBox="0 0 3 11" aria-hidden="true"><path d="M1 1v10" stroke="#5b6b85" strokeWidth="1.500" strokeDasharray="2 2" /></svg>
                选项模块:主要会计数据(无追溯)
              </ControlTag>
              <Handle>
                <svg width="11" height="11" viewBox="0 0 11 11" stroke="#44597c" fill="none" aria-hidden="true"><path d="M5.500 1v9M1 5.500h9M4 2.500L5.500 1 7 2.500M4 8.500L5.500 10 7 8.500M2.500 4L1 5.500 2.500 7M8.500 4L10 5.500 8.500 7" /></svg>
              </Handle>
            </Control>
            <Heading2><Num>(二)</Num>主要财务指标<Mark /></Heading2>
            <FinanceTable rows={tableTwo} cols={[206, 68, 66, 132, 131]} />
            <Para $h={22}><Mark /></Para>
            <Para>报告期末公司前三年主要会计数据和财务指标的说明<Mark /></Para>
            <ChoicePara>□适用 √不适用 <Mark /></ChoicePara>
            <Para $h={22}><Mark /></Para>
            <Heading1><Num>二、</Num>境内外会计准则下会计数据差异<Mark /></Heading1>
            <Heading2><Num $w={28}>(一)</Num><FullLine>同时按照国际会计准则与按中国会计准则披露的财务报告中净利润和归属于上市公司</FullLine></Heading2>
          </Page>
        </Canvas>
      </Work>

      <Status>
        <StatusLeft>
          <svg width="4" height="10" viewBox="0 0 4 10" aria-hidden="true"><path d="M0 2l4 7" stroke="#555" strokeWidth="1.500" /></svg>
          <PlainButton aria-label="录制宏">
            <svg width="15" height="14" viewBox="0 0 15 14" aria-hidden="true"><rect x="1.500" y="1.500" width="13" height="12" fill="#fff" stroke="#4a68a8" /><path d="M2 3h12" stroke="#4a68a8" strokeWidth="3" /><path d="M2 7h12M2 10h12M5 4v9M8.500 4v9M12 4v9" stroke="#a8b8dc" /><circle cx="3" cy="3.500" r="3" fill="#c25548" /></svg>
          </PlainButton>
        </StatusLeft>
        <StatusRight>
          <ViewButton $on aria-label="页面视图"><svg width="12" height="12" viewBox="0 0 12 12" fill="#fff" stroke="#5a5a5a" aria-hidden="true"><rect x=".5" y=".5" width="11" height="11" /><path d="M2 3.500h8M2 5.500h8M2 7.500h8M2 9.500h8" /></svg></ViewButton>
          <ViewButton aria-label="阅读版式"><svg width="13" height="12" viewBox="0 0 13 12" fill="#f6f6f6" stroke="#5a5a5a" aria-hidden="true"><path d="M.5 1h5l1 1 1-1h5v9h-5l-1 1.500-1-1.500h-5zM6.500 2v9M2 3.500h3M2 5.500h3M2 7.500h3M8 3.500h3M8 5.500h3M8 7.500h3" /></svg></ViewButton>
          <ViewButton aria-label="Web 版式"><svg width="13" height="12" viewBox="0 0 13 12" fill="#f6f6f6" stroke="#5a5a5a" aria-hidden="true"><path d="M.5.500h9v10h-9zM2 3h6M2 5h5M2 7h4" /><circle cx="9" cy="8.500" r="3" fill="#4f8fc0" stroke="#33658f" /></svg></ViewButton>
          <ViewButton aria-label="大纲视图"><svg width="12" height="12" viewBox="0 0 12 12" fill="none" stroke="#6a6a6a" aria-hidden="true"><path d="M1 1.500h8M4 3.500h7M4 5.500h7M1 7.500h8M6 9.500h5M4 11.500h7" strokeDasharray="3 1" /></svg></ViewButton>
          <ViewButton aria-label="草稿"><svg width="12" height="12" viewBox="0 0 12 12" fill="none" stroke="#5a5a5a" aria-hidden="true"><path d="M1 1.500h10M1 4.500h10M1 7.500h10M1 10.500h10" strokeWidth="1.300" /></svg></ViewButton>
          <ZoomText>100%</ZoomText>
          <ZoomOut aria-label="缩小"><svg width="7" height="2" aria-hidden="true"><path d="M0 1h7" stroke="#444" strokeWidth="2" /></svg></ZoomOut>
          <ZoomRange type="range" aria-label="显示比例" />
        </StatusRight>
      </Status>

      <Taskbar>
        <TaskEdge><CutLabel $w={15}>微信</CutLabel></TaskEdge>
        <TaskItems>
          {tasks.map((k, i) => <Task key={i} $bg={k.bg}>{k.icon}{k.t}</Task>)}
        </TaskItems>
        <Tray>
          {tray.map((t) => <TrayButton key={t.n} aria-label={t.n}><svg width="20" height="20" viewBox="0 0 24 24" fill="none" aria-hidden="true">{t.d}</svg></TrayButton>)}
          <TrayButton>中</TrayButton>
          <TrayButton aria-label="输入法"><svg width="20" height="20" viewBox="0 0 24 24" fill="none" aria-hidden="true"><path d="M3 4l15-2 4 3-2 14-14 3-4-3z" fill="#2fa345" /><path d="M17 6.500H10q-3 .5-2 3t4.500 2.500q4 .5 2.500 3.500-1 2-8 1.500" stroke="#fff" strokeWidth="2.800" /></svg></TrayButton>
          <Clock><span>15:16</span><span>2022/3/17</span></Clock>
        </Tray>
      </Taskbar>
    </Shell>
  );
}
